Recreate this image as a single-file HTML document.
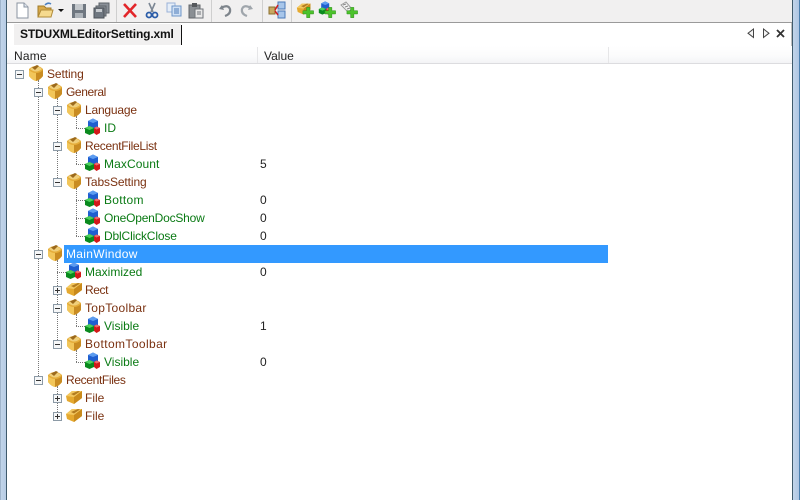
<!DOCTYPE html>
<html><head><meta charset="utf-8"><style>
html,body{margin:0;padding:0}
body{width:800px;height:500px;position:relative;overflow:hidden;background:#fff;font:12px/18px "Liberation Sans",sans-serif}
.a{position:absolute}
.t{position:absolute;height:18px;line-height:18px;white-space:nowrap}
.b{color:#7a3110}.g{color:#0a7a14}.v{color:#222;left:260px}
.h{position:absolute;width:1px;border-left:1px dotted #777}
.w{position:absolute;height:1px;border-top:1px dotted #777}
svg.i{position:absolute;width:18px;height:18px}
svg.x{position:absolute;width:9px;height:9px}
svg.tb{position:absolute;width:18px;height:18px;top:1px}
.sep{position:absolute;top:0;width:1px;height:22px;background:#cfcfcf}
</style></head><body>
<svg width="0" height="0" style="position:absolute"><defs>
<g id="box"><path d="M9 2 Q13 2 16 5 V12 Q13 16 9 17 Q5 16 2 12 V5 Q5 2 9 2Z" fill="#e5ad3a"/><path d="M2 6 Q5 9 9 9 V17 Q5 16 2 12Z" fill="#f2c65a"/><path d="M9 9 Q13 9 16 6 V12 Q13 16 9 17Z" fill="#c98c22"/><path d="M3 5 Q6 2.500 9 2.500 Q12 2.500 15 5 Q12 7.500 9 7.500 Q6 7.500 3 5Z" fill="#f0cf7a"/><path d="M5 3.500 L10 1 L12 2 L8 6Z" fill="#9c6a1c"/></g>
<g id="box2"><path d="M1 8 L7 3 L17 3 V10 L9 16 L2 13Z" fill="#e5a92f"/><path d="M1 8 L9 9 L17 3 L7 3Z" fill="#f3c860"/><path d="M9 9 L17 3 V10 L9 16Z" fill="#c98a1c"/><path d="M6 6 L13 3 L15 3.500 L9 7.500Z" fill="#b37c20"/></g>
<g id="cube"><path d="M4 3 L9 .5 L14 3 V9 L9 11.500 L4 9Z" fill="#1f5fd0"/><path d="M4 3 L9 5 L14 3 L9 .5Z" fill="#5c9cf0"/><path d="M1 10 L5.500 8 L10 10 V15 L5.500 17 L1 15Z" fill="#0a8a1e"/><path d="M1 10 L5.500 12 L10 10 L5.500 8Z" fill="#4dd05c"/><path d="M10 10 L12.500 8.500 L16 10 V15 L12.500 17 L10 15Z" fill="#d21a1a"/><path d="M10 10 L12.500 11.500 L16 10 L12.500 8.500Z" fill="#f06a6a"/></g>
<g id="m"><rect x=".5" y=".5" width="8" height="8" fill="#f6f7f8" stroke="#8c9aa6"/><path d="M2 4.500H7" stroke="#333"/></g>
<g id="p"><rect x=".5" y=".5" width="8" height="8" fill="#f6f7f8" stroke="#8c9aa6"/><path d="M2 4.500H7M4.500 2V7" stroke="#333"/></g>
<g id="plus"><path d="M5 0.500h4v4h4.500v4h-4.500v4.500h-4v-4.500h-4.500v-4h4.500z" fill="#4cc22c" stroke="#2d8f1a" stroke-width=".6"/></g>
</defs></svg>

<!-- window frame -->
<div class="a" style="left:0;top:0;width:6px;height:500px;background:linear-gradient(90deg,#7d95ad 0,#c2d5ea 1px,#b8cde5 5px)"></div>
<div class="a" style="left:6px;top:0;width:1px;height:500px;background:#3f5a6c"></div>
<div class="a" style="left:792px;top:0;width:1px;height:500px;background:#3f5a6c"></div>
<div class="a" style="left:793px;top:0;width:7px;height:500px;background:linear-gradient(90deg,#c2d5ea 0,#aec5e2 6px,#4a7fae 6px)"></div>

<!-- toolbar -->
<div class="a" style="left:7px;top:0;width:785px;height:22px;background:#f1f0f0"></div>
<div class="a" style="left:7px;top:22px;width:785px;height:1px;background:#9a9a9a"></div>

<svg class="tb" style="left:14px" viewBox="0 0 18 18"><path d="M3 2H10L14 6V17H3Z" fill="#fff" stroke="#8a93a0"/><path d="M10 2V6H14" fill="#dfe6ee" stroke="#8a93a0"/></svg>
<svg class="tb" style="left:36px" viewBox="0 0 18 18"><path d="M2 5H8L10 7H15V16H2Z" fill="#d9a94a" stroke="#a07a28"/><path d="M2 16 L5 9H17L15 16Z" fill="#f6da8e" stroke="#b08a38"/><path d="M9 4 Q12 1 15 3" fill="none" stroke="#4a7fc0" stroke-width="1.500"/></svg>
<svg class="a" style="left:58px;top:9px" width="6" height="4"><path d="M0 0H6L3 3Z" fill="#111"/></svg>
<svg class="tb" style="left:70px" viewBox="0 0 18 18"><rect x="2" y="3" width="14" height="14" fill="#6f7780"/><rect x="5" y="3" width="8" height="6" fill="#c4c8cc"/><rect x="5" y="12" width="8" height="5" fill="#aeb4ba"/></svg>
<svg class="tb" style="left:92px" viewBox="0 0 18 18"><rect x="7" y="2" width="10" height="10" fill="#8a9098" stroke="#5c6268"/><rect x="4" y="5" width="10" height="10" fill="#8a9098" stroke="#5c6268"/><rect x="2" y="7" width="10" height="10" fill="#6f7780" stroke="#4c5258"/><rect x="4" y="8" width="6" height="3" fill="#c8ccd0"/></svg>
<div class="sep" style="left:116px"></div>
<svg class="tb" style="left:121px" viewBox="0 0 18 18"><path d="M3 3L15 16M15 3L3 16" stroke="#e2262a" stroke-width="2.600"/></svg>
<svg class="tb" style="left:143px" viewBox="0 0 18 18"><path d="M6 2L10 11M12 2L8 11" stroke="#7c8794" stroke-width="1.600"/><circle cx="6" cy="14" r="2.500" fill="none" stroke="#2a5ca8" stroke-width="1.800"/><circle cx="12" cy="14" r="2.500" fill="none" stroke="#2a5ca8" stroke-width="1.800"/></svg>
<svg class="tb" style="left:165px" viewBox="0 0 18 18"><rect x="2" y="2" width="8" height="9" fill="#e6eef8" stroke="#9ab2d8"/><rect x="7" y="5" width="9" height="10" fill="#cfe0f5" stroke="#6f96c8"/><path d="M9 8h5M9 10h5M9 12h5" stroke="#4d7ab8"/></svg>
<svg class="tb" style="left:187px" viewBox="0 0 18 18"><rect x="2" y="4" width="11" height="13" fill="#8a8f94" stroke="#62666a"/><rect x="5" y="2" width="5" height="4" fill="#55595d"/><rect x="8" y="8" width="8" height="9" fill="#e8e8e8" stroke="#70757a"/><path d="M10 11h4M10 13h4" stroke="#70757a"/></svg>
<div class="sep" style="left:211px"></div>
<svg class="tb" style="left:216px" viewBox="0 0 18 18"><path d="M6 4 L3 8 L8 9 Z" fill="#7e858c"/><path d="M5 7 Q12 3 14 8 Q15 13 9 15" fill="none" stroke="#7e858c" stroke-width="2.200"/></svg>
<svg class="tb" style="left:238px" viewBox="0 0 18 18"><path d="M12 4 L15 8 L10 9 Z" fill="#a0a6ac"/><path d="M13 7 Q6 3 4 8 Q3 13 9 15" fill="none" stroke="#a0a6ac" stroke-width="2.200"/></svg>
<div class="sep" style="left:262px"></div>
<svg class="tb" style="left:268px" viewBox="0 0 18 18"><rect x="10" y="1" width="7" height="7" fill="#a8c6ea" stroke="#4d7ab8"/><rect x="10" y="10" width="7" height="7" fill="#a8c6ea" stroke="#4d7ab8"/><rect x="1" y="6" width="6" height="7" fill="#c8a860" stroke="#8a7030"/><path d="M7 9L10 4M7 10L10 14" stroke="#d02020" stroke-width="1.500"/></svg>
<div class="sep" style="left:291px"></div>
<svg class="tb" style="left:296px;top:1px;width:18px;height:18px" viewBox="0 0 18 18"><use href="#box2" transform="scale(.85)"/><use href="#plus" transform="translate(6.500 6) scale(.82)"/></svg>
<svg class="tb" style="left:318px;top:1px;width:18px;height:18px" viewBox="0 0 18 18"><use href="#cube" transform="scale(.8)"/><use href="#plus" transform="translate(6.500 6) scale(.82)"/></svg>
<svg class="tb" style="left:340px;top:1px;width:18px;height:18px" viewBox="0 0 18 18"><path d="M1 4L6 1L12 8L8 11Z" fill="#f4f4f4" stroke="#9a9a9a"/><path d="M3 4L6 3M5 6L8 5M7 8L10 7" stroke="#888"/><use href="#plus" transform="translate(6.500 6) scale(.82)"/></svg>

<!-- tab strip -->
<div class="a" style="left:791px;top:23px;width:1px;height:23px;background:#c0c0c0"></div>
<div class="a" style="left:14px;top:24px;width:167px;height:21px;background:#f1f0f0"></div>
<div class="a" style="left:181px;top:25px;width:1px;height:20px;background:#111"></div>
<div class="t" style="left:20px;top:25px;font-weight:bold;color:#111;letter-spacing:-.15px">STDUXMLEditorSetting.xml</div>
<svg class="a" style="left:747px;top:28px" width="8" height="11"><path d="M6.500 1V9.500L1 5.200Z" fill="#f4f4f4" stroke="#444"/></svg>
<svg class="a" style="left:762px;top:28px" width="8" height="11"><path d="M1.500 1V9.500L7 5.200Z" fill="#f4f4f4" stroke="#444"/></svg>
<svg class="a" style="left:776px;top:29px" width="9" height="9"><path d="M1 1L8 8M8 1L1 8" stroke="#333" stroke-width="1.800"/></svg>

<!-- header -->
<div class="a" style="left:7px;top:46px;width:785px;height:17px;background:linear-gradient(#fff,#fbfbfc 60%,#f3f4f6)"></div>
<div class="a" style="left:7px;top:63px;width:785px;height:1px;background:#dcdcdf"></div>
<div class="a" style="left:257px;top:47px;width:1px;height:16px;background:#e6e6e8"></div>
<div class="a" style="left:608px;top:47px;width:1px;height:16px;background:#e6e6e8"></div>
<div class="t" style="left:14px;top:47px;color:#222;letter-spacing:.2px">Name</div>
<div class="t" style="left:264px;top:47px;color:#222">Value</div>

<!-- tree lines -->
<div class="h" style="left:38px;top:80px;height:296px"></div>
<div class="h" style="left:57px;top:98px;height:80px"></div>
<div class="h" style="left:76px;top:116px;height:12px"></div>
<div class="h" style="left:76px;top:152px;height:12px"></div>
<div class="h" style="left:76px;top:188px;height:48px"></div>
<div class="h" style="left:57px;top:260px;height:80px"></div>
<div class="h" style="left:76px;top:314px;height:12px"></div>
<div class="h" style="left:76px;top:350px;height:12px"></div>
<div class="h" style="left:57px;top:386px;height:26px"></div>
<div class="w" style="left:76px;top:128px;width:9px"></div>
<div class="w" style="left:76px;top:164px;width:9px"></div>
<div class="w" style="left:76px;top:200px;width:9px"></div>
<div class="w" style="left:76px;top:218px;width:9px"></div>
<div class="w" style="left:76px;top:236px;width:9px"></div>
<div class="w" style="left:57px;top:272px;width:9px"></div>
<div class="w" style="left:76px;top:326px;width:9px"></div>
<div class="w" style="left:76px;top:362px;width:9px"></div>

<!-- selection -->
<div class="a" style="left:64px;top:245px;width:544px;height:18px;background:#3399ff"></div>

<!-- expanders -->
<svg class="x" style="left:15px;top:70px"><use href="#m"/></svg>
<svg class="x" style="left:34px;top:88px"><use href="#m"/></svg>
<svg class="x" style="left:53px;top:106px"><use href="#m"/></svg>
<svg class="x" style="left:53px;top:142px"><use href="#m"/></svg>
<svg class="x" style="left:53px;top:178px"><use href="#m"/></svg>
<svg class="x" style="left:34px;top:250px"><use href="#m"/></svg>
<svg class="x" style="left:53px;top:286px"><use href="#p"/></svg>
<svg class="x" style="left:53px;top:304px"><use href="#m"/></svg>
<svg class="x" style="left:53px;top:340px"><use href="#m"/></svg>
<svg class="x" style="left:34px;top:376px"><use href="#m"/></svg>
<svg class="x" style="left:53px;top:394px"><use href="#p"/></svg>
<svg class="x" style="left:53px;top:412px"><use href="#p"/></svg>

<!-- icons -->
<svg class="i" style="left:27px;top:64px"><use href="#box"/></svg>
<svg class="i" style="left:46px;top:82px"><use href="#box"/></svg>
<svg class="i" style="left:65px;top:100px"><use href="#box"/></svg>
<svg class="i" style="left:84px;top:118px"><use href="#cube"/></svg>
<svg class="i" style="left:65px;top:136px"><use href="#box"/></svg>
<svg class="i" style="left:84px;top:154px"><use href="#cube"/></svg>
<svg class="i" style="left:65px;top:172px"><use href="#box"/></svg>
<svg class="i" style="left:84px;top:190px"><use href="#cube"/></svg>
<svg class="i" style="left:84px;top:208px"><use href="#cube"/></svg>
<svg class="i" style="left:84px;top:226px"><use href="#cube"/></svg>
<svg class="i" style="left:46px;top:244px"><use href="#box"/></svg>
<svg class="i" style="left:65px;top:262px"><use href="#cube"/></svg>
<svg class="i" style="left:65px;top:280px"><use href="#box2"/></svg>
<svg class="i" style="left:65px;top:298px"><use href="#box"/></svg>
<svg class="i" style="left:84px;top:316px"><use href="#cube"/></svg>
<svg class="i" style="left:65px;top:334px"><use href="#box"/></svg>
<svg class="i" style="left:84px;top:352px"><use href="#cube"/></svg>
<svg class="i" style="left:46px;top:370px"><use href="#box"/></svg>
<svg class="i" style="left:65px;top:388px"><use href="#box2"/></svg>
<svg class="i" style="left:65px;top:406px"><use href="#box2"/></svg>

<!-- text -->
<div class="t b" style="left:47px;top:65px;letter-spacing:-.1px">Setting</div>
<div class="t b" style="left:66px;top:83px;letter-spacing:-.4px">General</div>
<div class="t b" style="left:85px;top:101px;letter-spacing:-.2px">Language</div>
<div class="t g" style="left:104px;top:119px">ID</div>
<div class="t b" style="left:85px;top:137px;letter-spacing:-.3px">RecentFileList</div>
<div class="t g" style="left:104px;top:155px;letter-spacing:.1px">MaxCount</div>
<div class="t v" style="top:155px">5</div>
<div class="t b" style="left:85px;top:173px;letter-spacing:-.1px">TabsSetting</div>
<div class="t g" style="left:104px;top:191px;letter-spacing:.3px">Bottom</div>
<div class="t v" style="top:191px">0</div>
<div class="t g" style="left:104px;top:209px;letter-spacing:-.2px">OneOpenDocShow</div>
<div class="t v" style="top:209px">0</div>
<div class="t g" style="left:104px;top:227px;letter-spacing:-.15px">DblClickClose</div>
<div class="t v" style="top:227px">0</div>
<div class="t" style="left:66px;top:245px;color:#fff;letter-spacing:.3px">MainWindow</div>
<div class="t g" style="left:85px;top:263px">Maximized</div>
<div class="t v" style="top:263px">0</div>
<div class="t b" style="left:85px;top:281px;letter-spacing:-.4px">Rect</div>
<div class="t b" style="left:85px;top:299px;letter-spacing:.3px">TopToolbar</div>
<div class="t g" style="left:104px;top:317px">Visible</div>
<div class="t v" style="top:317px">1</div>
<div class="t b" style="left:85px;top:335px;letter-spacing:.4px">BottomToolbar</div>
<div class="t g" style="left:104px;top:353px">Visible</div>
<div class="t v" style="top:353px">0</div>
<div class="t b" style="left:66px;top:371px;letter-spacing:-.35px">RecentFiles</div>
<div class="t b" style="left:85px;top:389px">File</div>
<div class="t b" style="left:85px;top:407px">File</div>
</body></html>
